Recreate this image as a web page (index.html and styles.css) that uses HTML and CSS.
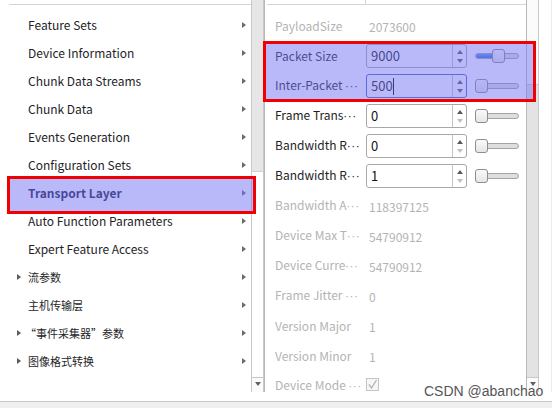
FILE: index.html
```html
<!DOCTYPE html>
<html>
<head>
<meta charset="utf-8">
<link rel="stylesheet" href="styles.css">
</head>
<body>
<div class="window">
  <div class="panes">
    <div class="tree">
      <div class="tree-head"></div>
      <ul class="menu">
        <li class="item"><span class="exp"></span><span class="label">Feature Sets</span><span class="sub"></span></li>
        <li class="item"><span class="exp"></span><span class="label">Device Information</span><span class="sub"></span></li>
        <li class="item"><span class="exp"></span><span class="label">Chunk Data Streams</span><span class="sub"></span></li>
        <li class="item"><span class="exp"></span><span class="label">Chunk Data</span><span class="sub"></span></li>
        <li class="item"><span class="exp"></span><span class="label">Events Generation</span><span class="sub"></span></li>
        <li class="item"><span class="exp"></span><span class="label">Configuration Sets</span><span class="sub"></span></li>
        <li class="item selected"><span class="exp"></span><span class="label">Transport Layer</span><span class="sub"></span></li>
        <li class="item"><span class="exp"></span><span class="label">Auto Function Parameters</span><span class="sub"></span></li>
        <li class="item"><span class="exp"></span><span class="label">Expert Feature Access</span><span class="sub"></span></li>
        <li class="item"><span class="exp"><i class="tri"></i></span><span class="label cjk">流参数</span><span class="sub"></span></li>
        <li class="item"><span class="exp"></span><span class="label cjk">主机传输层</span><span class="sub"></span></li>
        <li class="item"><span class="exp"><i class="tri"></i></span><span class="label cjk quote">“事件采集器”参数</span><span class="sub"></span></li>
        <li class="item"><span class="exp"><i class="tri"></i></span><span class="label cjk">图像格式转换</span><span class="sub"></span></li>
      </ul>
    </div>
    <div class="vscroll lscroll">
      <div class="track ltrack"></div>
      <div class="thumb lthumb"></div>
      <div class="btn-down"><i class="dn"></i></div>
    </div>
    <div class="table">
      <div class="thead"><div class="th first"></div><div class="th"></div></div>
      <div class="rows">
        <div class="row"><div class="name dis">PayloadSize</div><div class="val"><span class="txt dis">2073600</span></div></div>
        <div class="row"><div class="name">Packet Size</div><div class="val">
          <div class="spin"><span class="field">9000</span><span class="btns"><i class="up"></i><i class="down"></i></span></div>
          <div class="slider"><div class="groove"><div class="fill" style="width:18px"></div></div><div class="handle" style="left:17px"></div></div>
        </div></div>
        <div class="row"><div class="name">Inter-Packet <span class="el">···</span></div><div class="val">
          <div class="spin focus"><span class="field">500<b class="caret"></b></span><span class="btns"><i class="up"></i><i class="down"></i></span></div>
          <div class="slider"><div class="groove"></div><div class="handle" style="left:0"></div></div>
        </div></div>
        <div class="row"><div class="name">Frame Trans<span class="el">···</span></div><div class="val">
          <div class="spin"><span class="field">0</span><span class="btns"><i class="up"></i><i class="down off"></i></span></div>
          <div class="slider"><div class="groove"></div><div class="handle" style="left:0"></div></div>
        </div></div>
        <div class="row"><div class="name">Bandwidth R<span class="el">···</span></div><div class="val">
          <div class="spin"><span class="field">0</span><span class="btns"><i class="up"></i><i class="down off"></i></span></div>
          <div class="slider"><div class="groove"></div><div class="handle" style="left:0"></div></div>
        </div></div>
        <div class="row"><div class="name">Bandwidth R<span class="el">···</span></div><div class="val">
          <div class="spin"><span class="field">1</span><span class="btns"><i class="up"></i><i class="down off"></i></span></div>
          <div class="slider"><div class="groove"></div><div class="handle" style="left:0"></div></div>
        </div></div>
        <div class="row"><div class="name dis">Bandwidth A<span class="el">···</span></div><div class="val"><span class="txt dis">118397125</span></div></div>
        <div class="row"><div class="name dis">Device Max T<span class="el">···</span></div><div class="val"><span class="txt dis">54790912</span></div></div>
        <div class="row"><div class="name dis">Device Curre<span class="el">···</span></div><div class="val"><span class="txt dis">54790912</span></div></div>
        <div class="row"><div class="name dis">Frame Jitter <span class="el">···</span></div><div class="val"><span class="txt dis">0</span></div></div>
        <div class="row"><div class="name dis">Version Major</div><div class="val"><span class="txt dis">1</span></div></div>
        <div class="row"><div class="name dis">Version Minor</div><div class="val"><span class="txt dis">1</span></div></div>
        <div class="row last"><div class="name dis">Device Mode <span class="el">···</span></div><div class="val"><span class="check"><svg width="11" height="11" viewBox="0 0 11 11"><path d="M2 5.5 L4.5 9 L9.5 1" fill="none" stroke="#b4b4b4" stroke-width="1.3"/></svg></span></div></div>
      </div>
    </div>
    <div class="vscroll rscroll">
      <div class="thumb rthumb"></div>
      <div class="track rtrack"></div>
      <div class="btn-down"><i class="dn"></i></div>
    </div>
    <div class="edge"></div>
  </div>
  <div class="strip"></div>

  <div class="mark mark-left"></div>
  <div class="mark mark-right"></div>
  <div class="watermark">CSDN @abanchao</div>
</div>
</body>
</html>
```

FILE: styles.css
```css
* { box-sizing: border-box; }
html, body { margin: 0; padding: 0; }
body {
  width: 552px;
  height: 408px;
  overflow: hidden;
  background: #f0f0f0;
  font-family: "Noto Sans CJK SC", "Noto Sans", sans-serif;
  font-size: 12px;
  color: #1e1e28;
}
.window { position: relative; width: 552px; height: 408px; }
.panes { display: flex; height: 392px; background: #fff; overflow: hidden; }

/* left tree */
.tree { width: 251px; flex: none; }
.tree-head { height: 5px; margin-left: 9px; border-bottom: 1px solid #d4d4d4; }
.menu { list-style: none; margin: 6px 0 0; padding: 0; }
.item { height: 28px; display: flex; align-items: center; padding-right: 5px; }
.exp { width: 28px; flex: none; display: flex; align-items: center; padding-left: 17px; }
.tri, .sub {
  display: block;
  width: 0; height: 0;
  border-left: 4px solid #5a5a5a;
  border-top: 3.5px solid transparent;
  border-bottom: 3.5px solid transparent;
}
.sub { border-left-color: #6a6a6a; }
.label { flex: 1; white-space: nowrap; line-height: 16px; }
.selected .label { font-weight: bold; color: #1a1a3a; }
.cjk { font-size: 11px; }
.quote { margin-left: -3px; }

/* scrollbars */
.vscroll { flex: none; display: flex; flex-direction: column; background: #fff; }
.lscroll { width: 13px; border-left: 1px solid #c8c8c8; border-right: 1px solid #c8c8c8; }
.ltrack { height: 172px; background: #e6e6e6; border-bottom: 1px solid #d0d0d0; }
.lthumb { flex: 1; background: #fff; }
.rscroll { width: 12px; border-right: 1px solid #c8c8c8; }
.rthumb { height: 85px; background: #fbfbfb; border-bottom: 1px solid #c8c8c8; }
.rtrack { flex: 1; background: #e3e3e3; }
.btn-down {
  height: 15px;
  background: #fbfbfb;
  border-top: 1px solid #c8c8c8;
  display: flex;
  align-items: center;
  justify-content: center;
  padding-bottom: 2px;
}
.dn {
  display: block; width: 0; height: 0;
  border-top: 4px solid #606060;
  border-left: 3.5px solid transparent;
  border-right: 3.5px solid transparent;
}
.edge { flex: 1; border-right: 1px solid #ececec; background: #fff; }

/* table */
.table { width: 263px; flex: none; border-left: 1px solid #b8b8b8; border-right: 1px solid #b8b8b8; }
.thead { display: flex; height: 5px; border-bottom: 1px solid #d4d4d4; margin-left: 2px; }
.th.first { width: 99px; border-right: 1px solid #d4d4d4; }
.rows { margin-top: 6px; }
.row { display: grid; grid-template-columns: 101px 1fr; height: 30px; align-items: center; }
.row.last { align-items: start; padding-top: 7px; }
.name { padding-left: 10px; white-space: nowrap; color: #1e1e24; line-height: 14px; }
.el { font-family: "DejaVu Sans", sans-serif; font-size: 11px; letter-spacing: 1px; }
.dis { color: #b4b4b4; }
.val { display: flex; align-items: center; }
.txt { padding-left: 3px; }

.spin {
  width: 101px; height: 24px;
  display: flex;
  border: 1px solid #a8a8a8;
  border-radius: 3px;
  background: #fff;
}
.spin.focus { border-color: #3c68c0; }
.field { flex: 1; padding-left: 4px; font-size: 13px; line-height: 22px; color: #141414; display: flex; align-items: center; }
.caret { display: block; width: 1px; height: 17px; background: #000; margin-left: 0; }
.btns {
  width: 14px;
  border-left: 1px solid #c4c4c4;
  display: flex; flex-direction: column; align-items: center; justify-content: center; gap: 5px;
}
.up, .down { display: block; width: 0; height: 0; border-left: 3.5px solid transparent; border-right: 3.5px solid transparent; }
.up { border-bottom: 4px solid #5a5a5a; }
.down { border-top: 4px solid #5a5a5a; }
.down.off { border-top-color: #c0c0c0; }

.slider { position: relative; width: 44px; height: 14px; margin-left: 8px; }
.groove {
  position: absolute; left: 0; right: 0; top: 4px; height: 6px;
  border: 1px solid #a4a4a4; border-radius: 3px; background: #dedede; overflow: hidden;
}
.fill { height: 100%; background: linear-gradient(#5a9af0, #2f6fd0); }
.handle {
  position: absolute; top: 0; width: 13px; height: 14px;
  border: 1px solid #8e8e8e; border-radius: 3px;
  background: linear-gradient(#fafafa, #e6e6e6);
}
.check {
  display: flex; align-items: center; justify-content: center;
  width: 13px; height: 13px; border: 1px solid #c4c4c4; background: #f6f6f6;
}

.strip { height: 10px; background: #fff; border-bottom: 1px solid #c8c8c8; }

/* annotation overlays */
.mark { position: absolute; border: 3px solid #f00000; background: rgba(115, 115, 245, 0.5); }
.mark-left { left: 7px; top: 176px; width: 249px; height: 38px; }
.mark-right { left: 263px; top: 41px; width: 273px; height: 61px; }

.watermark {
  position: absolute; left: 424px; top: 383px;
  font-family: "Liberation Sans", Arial, sans-serif; font-size: 14px;
  color: #555; text-shadow: 0 0 2px #fff;
  white-space: nowrap;
}
```
